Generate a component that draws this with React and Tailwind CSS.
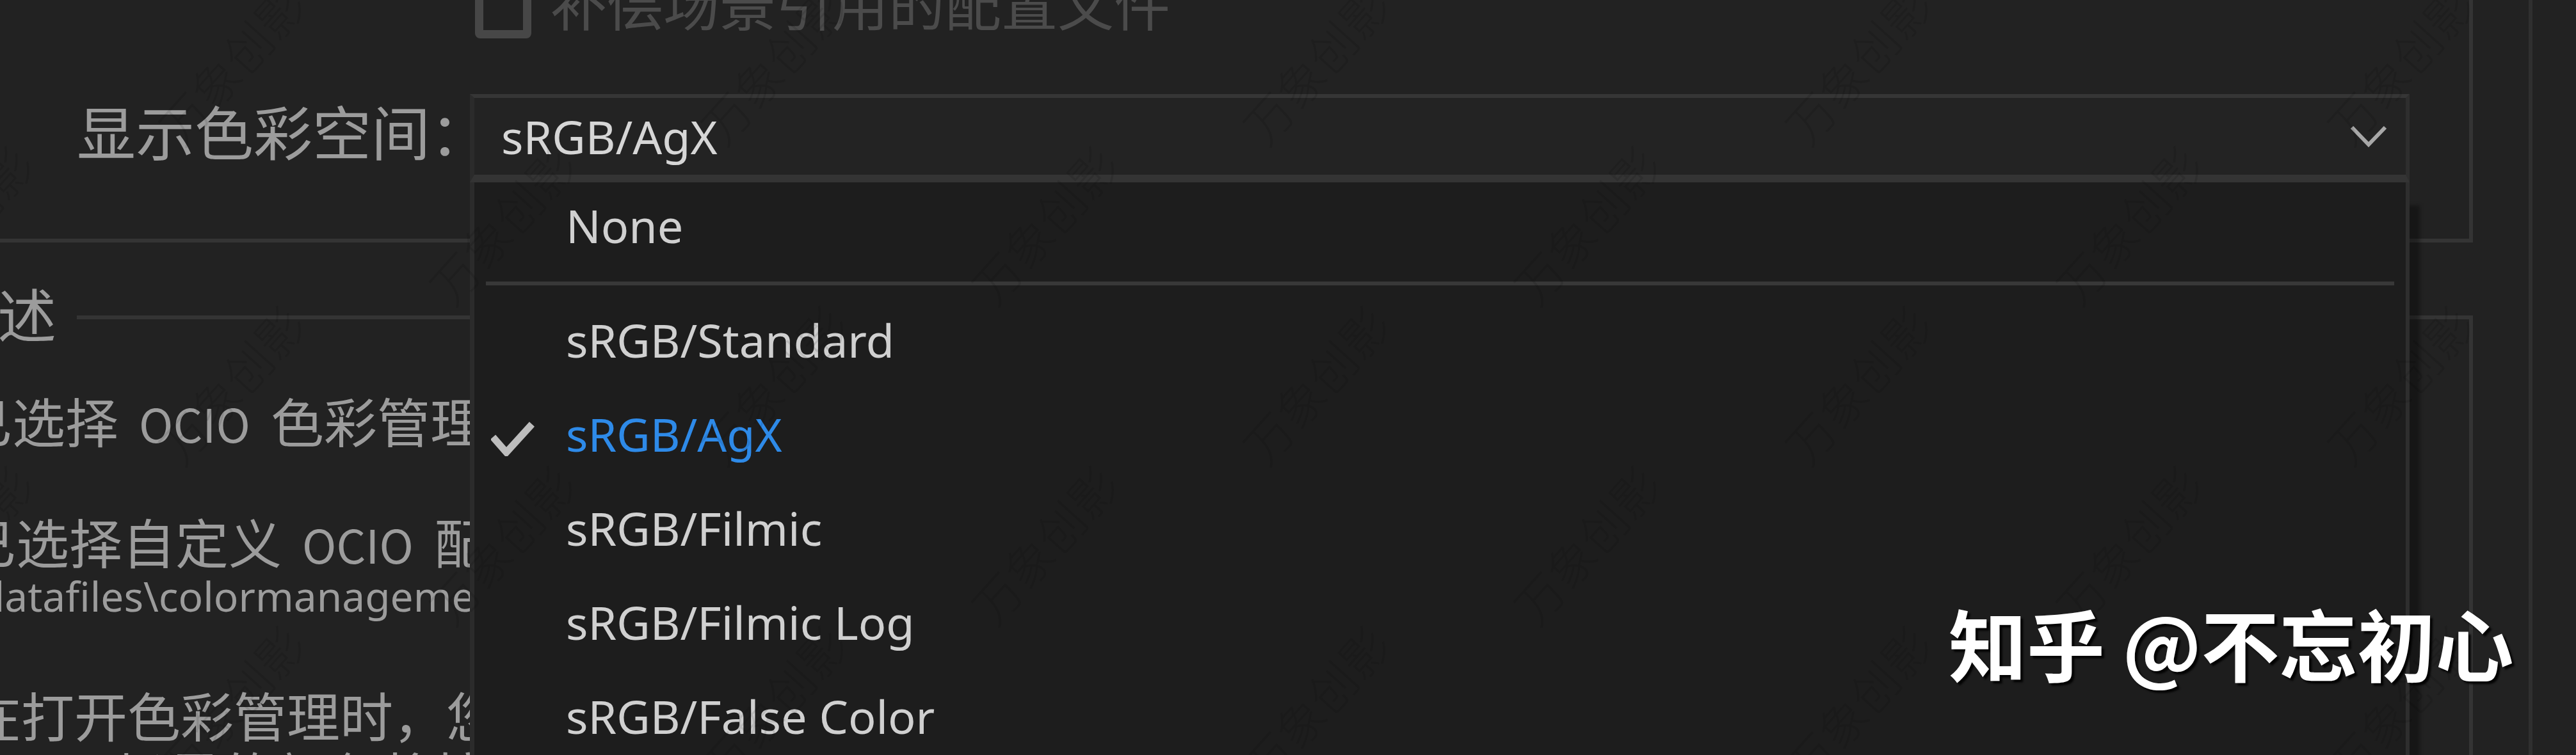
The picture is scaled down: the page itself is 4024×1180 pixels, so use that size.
import React from 'react';

const options = [
  { label: 'sRGB/Standard' },
  { label: 'sRGB/AgX', selected: true },
  { label: 'sRGB/Filmic' },
  { label: 'sRGB/Filmic Log' },
  { label: 'sRGB/False Color' },
  { label: 'sRGB/Khronos PBR Neutral' },
];

// 背景水印：按行错位平铺
function Watermarks() {
  const marks = [];
  for (let r = -1; r < 6; r++) {
    for (let c = -1; c < 5; c++) {
      marks.push({ x: 360 + 847 * c + (r % 2 !== 0 ? 423 : 0), y: 100 + 250 * r });
    }
  }
  return (
    <div className="pointer-events-none absolute inset-0 overflow-hidden">
      {marks.map((m, i) => (
        <span
          key={i}
          className="absolute -translate-x-1/2 -translate-y-1/2 -rotate-[48deg] whitespace-nowrap text-[74px] leading-none font-light text-black/10"
          style={{ left: m.x, top: m.y }}
        >
          万象创影
        </span>
      ))}
    </div>
  );
}

function Chevron() {
  return (
    <svg width="60" height="36" viewBox="0 0 60 36" fill="none">
      <polyline points="4,4 30,31 56,4" stroke="#a8a8a8" strokeWidth="6" />
    </svg>
  );
}

function Check() {
  return (
    <svg className="mt-[17px]" width="68" height="54" viewBox="0 0 68 54" fill="none">
      <polyline points="3,24 24,48 64,4" stroke="#bdbdbd" strokeWidth="11" />
    </svg>
  );
}

export default function App() {
  return (
    <div className="relative flex h-[1180px] w-[4024px] overflow-hidden bg-[#222222] font-['Noto_Sans_CJK_SC','Noto_Sans',sans-serif]">
      <div className="w-[3950px] shrink-0">
        {/* 色彩管理分组 */}
        <div className="w-[3863px] border-r-[6px] border-b-[6px] border-[#343434] pb-[88px]">
          <div className="-mt-[28px] ml-[742px] flex h-[88px] items-center">
            <div className="h-[88px] w-[88px] shrink-0 rounded-[8px] border-[13px] border-[#474747]" />
            <span className="-mt-[28px] ml-[30px] whitespace-nowrap text-[88px] leading-none text-[#4b4b4b]">
              补偿场景引用的配置文件
            </span>
          </div>

          <div className="mt-[87px] flex h-[138px] items-center">
            <div className="-mt-[26px] w-[734px] shrink-0 whitespace-nowrap pl-[120px] text-[92px] leading-none text-[#9c9c9c]">
              显示色彩空间：
            </div>
            <div className="flex h-[138px] w-[3030px] shrink-0 items-center justify-between border-t-[6px] border-r-[6px] border-b-[12px] border-l-[7px] border-t-[#363636] border-r-[#2e2e2e] border-b-[#343434] border-l-[#2b2b2b] bg-[#232323] pr-[28px] pl-[42px]">
              <span className="font-['Noto_Sans',sans-serif] text-[72px] leading-none text-[#d6d6d6]">sRGB/AgX</span>
              <Chevron />
            </div>
          </div>
        </div>

        {/* 描述分组 */}
        <div className="mt-[114px] flex h-[6px] w-[3863px] items-center">
          <span className="-mt-[16px] -ml-[96px] shrink-0 whitespace-nowrap text-[92px] leading-none text-[#9c9c9c]">
            描述
          </span>
          <div className="ml-[32px] h-[6px] flex-1 bg-[#343434]" />
        </div>
        <div className="h-[700px] w-[3863px] border-r-[6px] border-[#343434] pt-[110px] text-[83px] text-[#9c9c9c]">
          <div className="-ml-[64px] h-[94px] whitespace-nowrap leading-[94px]">
            已选择<span className="mx-[32px] text-[72px]">OCIO</span>色彩管理，将使用软件内置的配置文件。
          </div>

          <div className="mt-[95px] -ml-[58px] h-[94px] whitespace-nowrap leading-[94px]">
            已选择自定义<span className="mx-[32px] text-[72px]">OCIO</span>配置文件：
          </div>
          <div className="-ml-[32px] h-[80px] whitespace-nowrap font-['Noto_Sans',sans-serif] text-[64px] leading-[80px]">
            datafiles\colormanagement\config.ocio
          </div>

          <div className="mt-[97px] -ml-[50px] h-[94px] whitespace-nowrap leading-[94px]">
            在打开色彩管理时，您可以选择显示色彩空间。
          </div>
          <div className="h-[94px] whitespace-nowrap pl-[180px] leading-[94px]">
            场景的颜色将按所选配置转换后显示。
          </div>
        </div>
      </div>
      <div className="w-[6px] shrink-0 bg-[#2f2f2f]" />
      <div className="flex-1" />

      {/* 下拉列表 */}
      <div className="absolute top-[285px] left-[734px] h-[1000px] w-[3030px] border-r-[6px] border-l-[7px] border-r-[#2e2e2e] border-l-[#2b2b2b] bg-[#1d1d1d] font-['Noto_Sans',sans-serif] text-[72px] text-[#d0d0d0] shadow-[16px_36px_6px_rgba(0,0,0,0.35)]">
        <div className="flex h-[134px] items-center pl-[143px] leading-none">None</div>
        <div className="mx-[18px] mt-[21px] mb-[11px] h-[6px] bg-[#383838]" />
        {options.map((o) => (
          <div key={o.label} className="flex h-[147px] items-center leading-none">
            <div className="flex w-[143px] shrink-0 pl-[26px]">{o.selected && <Check />}</div>
            <span className={o.selected ? 'text-[#2e8ae8]' : ''}>{o.label}</span>
          </div>
        ))}
      </div>

      <Watermarks />

      <div className="absolute top-[942px] left-[3044px] whitespace-nowrap text-[122px] font-bold leading-none text-white [text-shadow:4px_4px_3px_rgba(0,0,0,0.9)]">
        知乎 @不忘初心
      </div>
    </div>
  );
}
